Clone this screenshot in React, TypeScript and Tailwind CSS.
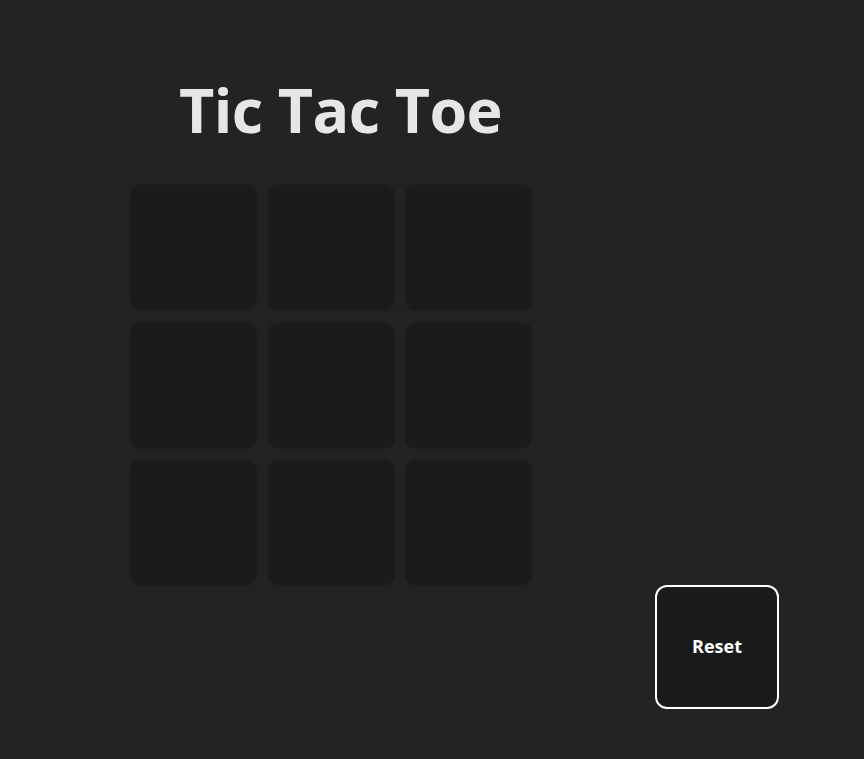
import React from "react";

export default function App() {
  const cells = Array.from({ length: 9 });
  return (
    <div className="min-h-[759px] w-full bg-[#232323] pl-[131px] pt-[70px]" style={{ fontFamily: '"Open Sans", "Noto Sans", sans-serif' }}>
      <div className="flex w-[400px] justify-center pl-[19px]">
        <h1 className="text-[61px] font-bold leading-[80px] text-[#e6e6e6] tracking-[-0.6px]">Tic Tac Toe</h1>
      </div>
      <div className="mt-[35px] grid w-[400px] grid-cols-[125px_125px_125px] gap-[12.5px]">
        {cells.map((_, i) => (
          <button
            key={i}
            className="h-[125px] w-[125px] rounded-[10px] bg-[#1b1b1b] shadow-[0_0_3px_rgba(0,0,0,0.35)]"
          />
        ))}
      </div>
      <div className="ml-[524px] -mt-[0.5px]">
        <button className="flex h-[124.5px] w-[124px] items-center justify-center rounded-[12px] border-2 border-white bg-[#1b1b1b] text-[18px] font-bold text-white">
          Reset
        </button>
      </div>
    </div>
  );
}
